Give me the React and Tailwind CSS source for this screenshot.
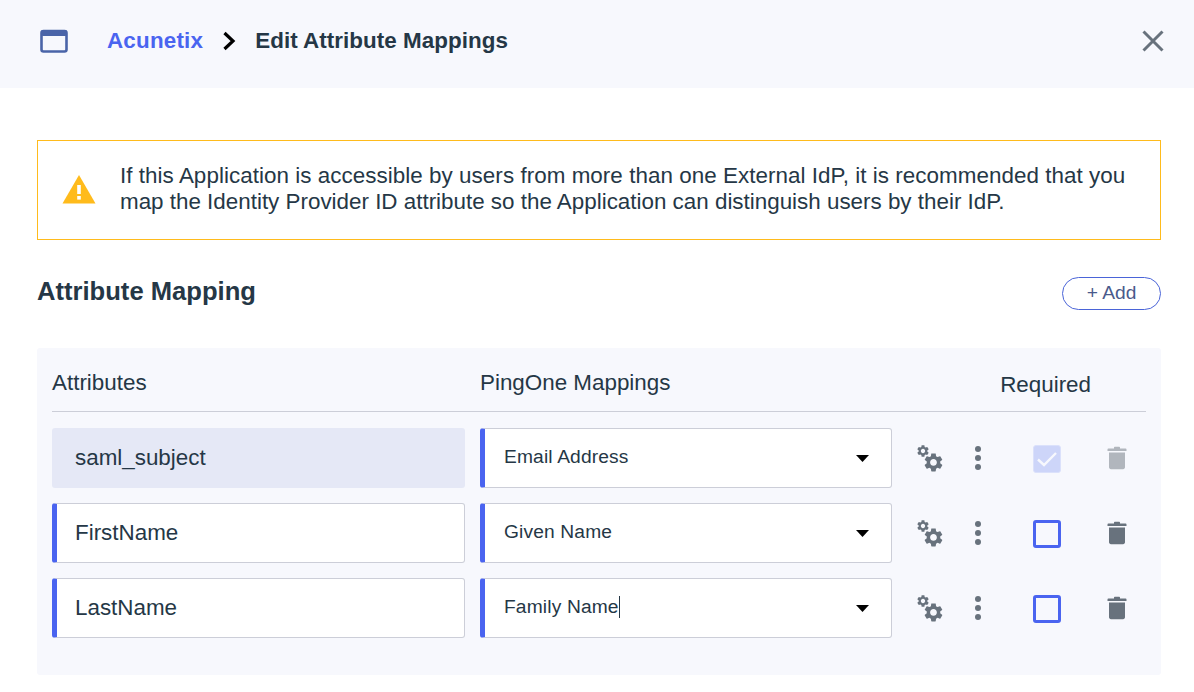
const GEAR = "M19.14 12.94c.04-.3.06-.61.06-.94 0-.32-.02-.64-.07-.94l2.03-1.58c.18-.14.23-.41.12-.61l-1.92-3.32c-.12-.22-.37-.29-.59-.22l-2.39.96c-.5-.38-1.03-.7-1.62-.94l-.36-2.54c-.04-.24-.24-.41-.48-.41h-3.84c-.24 0-.43.17-.47.41l-.36 2.54c-.59.24-1.13.57-1.62.94l-2.39-.96c-.22-.08-.47 0-.59.22L2.74 8.87c-.12.21-.08.47.12.61l2.03 1.58c-.05.3-.09.63-.09.94s.02.64.07.94l-2.03 1.58c-.18.14-.23.41-.12.61l1.92 3.32c.12.22.37.29.59.22l2.39-.96c.5.38 1.03.7 1.62.94l.36 2.54c.05.24.24.41.48.41h3.84c.24 0 .44-.17.47-.41l.36-2.54c.59-.24 1.13-.56 1.62-.94l2.39.96c.22.08.47 0 .59-.22l1.92-3.32c.12-.22.07-.47-.12-.61l-2.01-1.58zM12 15.6c-1.98 0-3.6-1.62-3.6-3.6s1.62-3.6 3.6-3.6 3.6 1.62 3.6 3.6-1.62 3.6-3.6 3.6z";

function Gears() {
  return (
    <svg width="28" height="28" viewBox="0 0 28 28" fill="#68727d" className="shrink-0 mt-[1px]">
      <g transform="translate(-1.2 -1.2) scale(0.6)"><path d={GEAR} /></g>
      <g transform="translate(5.2 6.2) scale(0.94)"><path d={GEAR} /></g>
    </svg>
  );
}

function Dots() {
  return (
    <svg width="8" height="26" viewBox="0 0 8 26" fill="#68727d" className="shrink-0">
      <circle cx="4" cy="4" r="3" />
      <circle cx="4" cy="13" r="3" />
      <circle cx="4" cy="22" r="3" />
    </svg>
  );
}

function Trash({ light }) {
  return (
    <svg width="20" height="24" viewBox="0 0 20 24" fill={light ? "#b1b6bd" : "#68727d"} className="shrink-0">
      <path d="M7 1.6 C7 1 7.5 .8 8 .8 H12 C12.5 .8 13 1 13 1.6 V2.6 H18.6 C19.2 2.6 19.5 3 19.5 3.6 V5 H.5 V3.6 C.5 3 .8 2.6 1.4 2.6 H7 Z" />
      <path d="M2 6.4 H18 V21 C18 22.4 17.2 23.2 16 23.2 H4 C2.8 23.2 2 22.4 2 21 Z" />
    </svg>
  );
}

function Box({ checked }) {
  if (checked) {
    return (
      <div className="w-[28px] h-[28px] rounded-[3px] bg-[#cdd5f9] border border-[#dbe1fb] flex items-center justify-center">
        <svg width="22" height="18" viewBox="0 0 22 18" fill="none" stroke="#f7f8fd" strokeWidth="2.4">
          <path d="M2 9.5 L8 15 L20 3" />
        </svg>
      </div>
    );
  }
  return <div className="w-[28px] h-[28px] rounded-[3px] border-[3px] border-[#4a64f0] bg-transparent" />;
}

function Row({ name, map, disabled, caret }) {
  return (
    <div className="flex items-center h-[60px]">
      {disabled ? (
        <div className="w-[413px] h-[60px] rounded-[3px] bg-[#e5e8f6] flex items-center pl-[23px] text-[22.4px] text-[#253746]">
          {name}
        </div>
      ) : (
        <div className="w-[413px] h-[60px] rounded-[3px] bg-white border border-[#ccced8] border-l-[5px] border-l-[#4a64f0] flex items-center pl-[18px] text-[22.4px] text-[#253746]">
          {name}
        </div>
      )}
      <div className="ml-[15px] w-[412px] h-[60px] rounded-[3px] bg-white border border-[#ccced8] border-l-[5px] border-l-[#4a64f0] flex items-center pl-[19px] pr-[22px] justify-between">
        <span className="flex items-center text-[19.2px] tracking-[0.15px] -mt-[2px] text-[#253746]">
          {map}
          {caret && <span className="inline-block w-px h-[22px] bg-[#253746]" />}
        </span>
        <svg width="13" height="7" viewBox="0 0 13 7" fill="#000"><path d="M0 0 H13 L6.5 7 Z" /></svg>
      </div>
      <div className="ml-[25px] flex items-center">
        <Gears />
        <div className="ml-[29px]"><Dots /></div>
        <div className="ml-[51px] mt-[2px]"><Box checked={disabled} /></div>
        <div className="ml-[46px]"><Trash light={disabled} /></div>
      </div>
    </div>
  );
}

export default function App() {
  return (
    <div className="w-[1194px] h-[692px] overflow-hidden bg-white font-['Liberation_Sans',Arial,sans-serif] text-[#253746]">
      <header className="h-[88px] bg-[#f7f8fd] flex items-center pl-[40px] pr-[29px]">
        <svg width="28" height="26" viewBox="0 0 28 26" className="shrink-0 -mt-[6px]">
          <rect x="1.5" y="3" width="25" height="20.5" rx="2" fill="none" stroke="#4a64a8" strokeWidth="2.6" />
          <rect x="1" y="2" width="26" height="6" rx="2" fill="#4a64a8" />
        </svg>
        <span className="ml-[39px] -mt-[7px] text-[22.4px] font-bold tracking-[0.2px] text-[#4a64f0]">Acunetix</span>
        <svg width="14" height="20" viewBox="0 0 14 20" fill="none" stroke="#000" strokeWidth="3.2" className="ml-[19px] -mt-[7px]">
          <path d="M2.5 2 L11 10 L2.5 18" />
        </svg>
        <span className="ml-[19px] -mt-[7px] text-[22.4px] font-bold tracking-[0.05px] text-[#253746]">Edit Attribute Mappings</span>
        <svg width="24" height="24" viewBox="0 0 24 24" fill="none" stroke="#68727d" strokeWidth="3" className="ml-auto -mt-[7px]">
          <path d="M2.5 2.5 L21.5 21.5 M21.5 2.5 L2.5 21.5" />
        </svg>
      </header>

      <main className="pl-[37px] pr-[33px] pt-[52px]">
        <div className="h-[100px] border border-[#ffbb1c] flex items-center pl-[24px]">
          <svg width="34" height="30" viewBox="0 0 34 30" className="shrink-0 -mt-[2px]">
            <path d="M17 1 L33.5 29.5 H.5 Z" fill="#ffbb1c" />
            <rect x="15.2" y="11" width="3.6" height="9" fill="#fff" />
            <rect x="15.2" y="22" width="3.6" height="3.6" fill="#fff" />
          </svg>
          <p className="ml-[24px] -mt-[2px] text-[22.4px] leading-[26px] text-[#253746]">
            <span className="tracking-[0.05px]">If this Application is accessible by users from more than one External IdP, it is recommended that you</span><br />
            map the Identity Provider ID attribute so the Application can distinguish users by their IdP.
          </p>
        </div>

        <div className="mt-[36px] h-[34px] flex items-center justify-between">
          <h2 className="text-[25.6px] font-bold text-[#253746] -mt-[4px]">Attribute Mapping</h2>
          <button className="w-[99px] h-[33px] rounded-full border border-[#4a64d8] text-[19.2px] text-[#4a5a8c] bg-white">+ Add</button>
        </div>

        <section className="mt-[38px] h-[327px] rounded-[3px] bg-[#f7f8fd] px-[15px]">
          <div className="h-[64px] border-b border-[#ccced8] flex items-center text-[22.4px] text-[#253746]">
            <span className="w-[428px] mt-[6px]">Attributes</span>
            <span className="mt-[6px]">PingOne Mappings</span>
            <span className="ml-auto mr-[55px] mt-[11px]">Required</span>
          </div>
          <div className="mt-[16px] flex flex-col gap-[15px]">
            <Row name="saml_subject" map="Email Address" disabled />
            <Row name="FirstName" map="Given Name" />
            <Row name="LastName" map="Family Name" caret />
          </div>
        </section>
      </main>
    </div>
  );
}
